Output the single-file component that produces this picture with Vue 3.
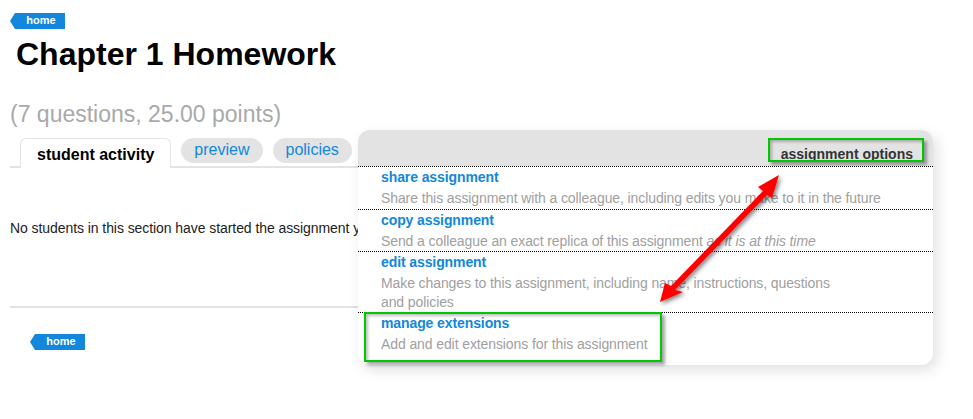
<script setup>
const options = [
  { title: 'share assignment', text: 'Share this assignment with a colleague, including edits you make to it in the future' },
  { title: 'copy assignment', text: 'Send a colleague an exact replica of this assignment ', em: 'as it is at this time' },
  { title: 'edit assignment', text: 'Make changes to this assignment, including name, instructions, questions and policies', narrow: true },
  { title: 'manage extensions', text: 'Add and edit extensions for this assignment' }
]
</script>

<template>
  <div class="page">
    <a class="home home--top">home</a>
    <h1 class="title">Chapter 1 Homework</h1>
    <div class="points">(7 questions, 25.00 points)</div>
    <div class="tabs">
      <div class="tab tab--active">student activity</div>
      <div class="tab">preview</div>
      <div class="tab">policies</div>
    </div>
    <p class="empty">No students in this section have started the assignment yet.</p>
    <div class="footer">
      <a class="home">home</a>
    </div>

    <div class="menu">
      <div class="menu__head">assignment options</div>
      <div v-for="o in options" :key="o.title" class="option">
        <div class="option__title">{{ o.title }}</div>
        <div class="option__text" :class="{ 'option__text--narrow': o.narrow }">{{ o.text }}<em v-if="o.em">{{ o.em }}</em></div>
      </div>
    </div>

    <div class="mark mark--head"></div>
    <div class="mark mark--row"></div>

    <svg class="arrow" width="973" height="419" viewBox="0 0 973 419">
      <defs>
        <filter id="arrowShadow" x="-20%" y="-20%" width="140%" height="140%">
          <feDropShadow dx="2" dy="2" stdDeviation="2" flood-color="#000" flood-opacity="0.5" />
        </filter>
      </defs>
      <path filter="url(#arrowShadow)" fill="#f00" d="M779 175 L758 187 L763 191 L671 286 L665 283 L660 302 L683 292 L675 290 L767 195 L772 198 Z" />
    </svg>
  </div>
</template>

<style>
html, body {
  background: #fff;
}
</style>

<style scoped>
.page {
  position: relative;
  width: 973px;
  height: 419px;
  overflow: hidden;
  box-sizing: border-box;
  padding: 13px 0 0 10px;
  font-family: "Liberation Sans", Arial, sans-serif;
  color: #000;
}
.home {
  display: block;
  position: relative;
  box-sizing: border-box;
  width: 50px;
  height: 16px;
  margin-left: 5px;
  padding-left: 2px;
  background: #1287db;
  color: #fff;
  font-size: 11px;
  font-weight: bold;
  line-height: 15px;
  text-align: center;
}
.home::before {
  content: "";
  position: absolute;
  left: -5px;
  top: 0;
  border-style: solid;
  border-width: 8px 5px 8px 0;
  border-color: transparent #1287db transparent transparent;
}
.title {
  margin: 7px 0 0 6px;
  font-size: 32px;
  line-height: 36px;
  font-weight: bold;
}
.points {
  margin-top: 28px;
  font-size: 23px;
  line-height: 28px;
  color: #a9a9a9;
}
.tabs {
  display: flex;
  align-items: flex-start;
  gap: 10px;
  width: 800px;
  height: 28px;
  margin-top: 10px;
  padding-left: 10px;
  border-bottom: 2px solid #e3e3e3;
}
.tab {
  height: 25px;
  padding: 0 13px;
  border-radius: 13px;
  background: #e3e3e3;
  color: #1287db;
  font-size: 16px;
  line-height: 23px;
}
.tab--active {
  height: 30px;
  box-sizing: border-box;
  padding: 0 16px;
  border: 1px solid #e3e3e3;
  border-bottom: 0;
  border-radius: 6px 6px 0 0;
  background: #fff;
  color: #000;
  font-weight: bold;
  line-height: 32px;
}
.empty {
  margin: 52px 0 0;
  font-size: 14px;
  line-height: 16px;
  letter-spacing: -0.07px;
  color: #222;
}
.footer {
  width: 800px;
  margin-top: 70px;
  padding: 26px 0 0 20px;
  border-top: 2px solid #e3e3e3;
}
.menu {
  position: absolute;
  left: 358px;
  top: 130px;
  width: 575px;
  height: 235px;
  background: #fff;
  border-radius: 12px;
  box-shadow: 4px 5px 14px rgba(0, 0, 0, 0.12);
}
.menu__head {
  height: 36px;
  box-sizing: border-box;
  padding: 16px 20px 0 0;
  border-radius: 12px 12px 0 0;
  background: #e3e3e3;
  color: #333;
  font-size: 14px;
  line-height: 17px;
  font-weight: bold;
  text-align: right;
}
.option {
  padding: 1px 20px 0 23px;
  border-top: 1px dotted #000;
}
.option:nth-child(2) {
  padding-bottom: 1px;
}
.option__title {
  color: #1287db;
  font-size: 14px;
  line-height: 19px;
  font-weight: bold;
  letter-spacing: -0.1px;
}
.option__text {
  margin-top: 2px;
  color: #a0a0a0;
  font-size: 14px;
  line-height: 19px;
  letter-spacing: -0.1px;
}
.option__text--narrow {
  max-width: 460px;
}
.mark {
  position: absolute;
  box-sizing: border-box;
  border: 2px solid #00c800;
  box-shadow: 3px 3px 3px rgba(0, 0, 0, 0.35), inset 2px 2px 3px rgba(0, 0, 0, 0.25);
}
.mark--head {
  left: 768px;
  top: 138px;
  width: 156px;
  height: 24px;
}
.mark--row {
  left: 364px;
  top: 312px;
  width: 298px;
  height: 50px;
}
.arrow {
  position: absolute;
  left: 0;
  top: 0;
}
</style>
